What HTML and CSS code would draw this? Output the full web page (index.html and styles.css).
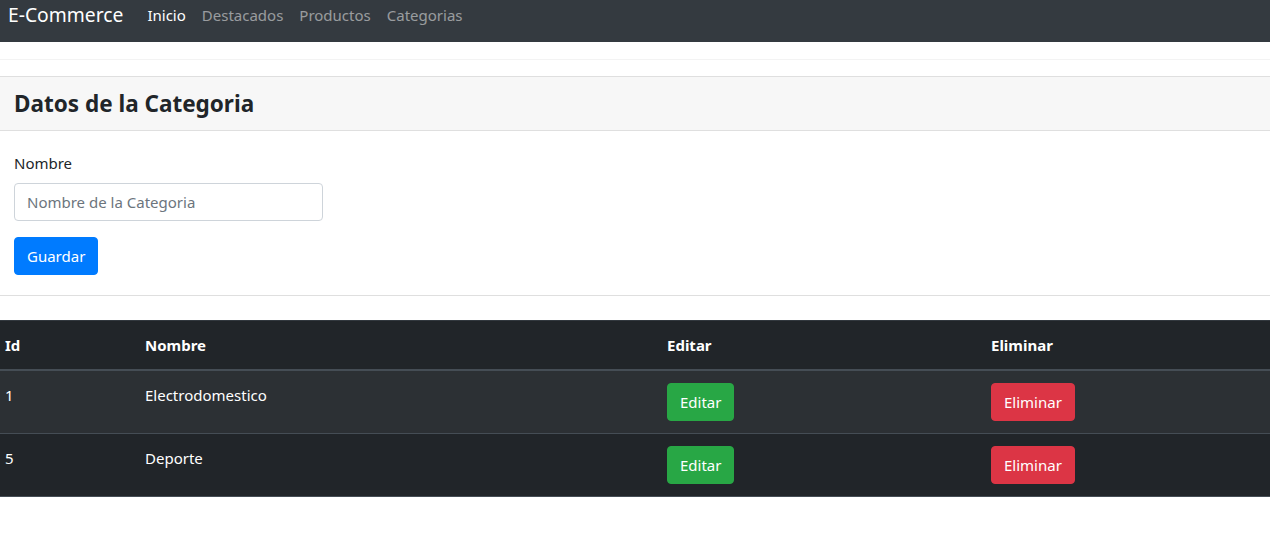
FILE: index.html
```html
<!DOCTYPE html>
<html lang="es">
<head>
<meta charset="utf-8">
<title>E-Commerce</title>
<link rel="stylesheet" href="styles.css">
</head>
<body>
<nav class="navbar">
  <a class="brand" href="#">E-Commerce</a>
  <ul class="nav-links">
    <li><a class="nav-link active" href="#">Inicio</a></li>
    <li><a class="nav-link" href="#">Destacados</a></li>
    <li><a class="nav-link" href="#">Productos</a></li>
    <li><a class="nav-link" href="#">Categorias</a></li>
  </ul>
</nav>
<div class="divider"></div>
<section class="card">
  <header class="card-header"><h3>Datos de la Categoria</h3></header>
  <div class="card-body">
    <div class="form-group">
      <label class="label" for="nombre">Nombre</label>
      <input class="input" id="nombre" type="text" placeholder="Nombre de la Categoria">
    </div>
    <button class="btn btn-primary" type="button">Guardar</button>
  </div>
</section>
<table class="table">
  <thead>
    <tr><th class="c1">Id</th><th class="c2">Nombre</th><th class="c3">Editar</th><th class="c4">Eliminar</th></tr>
  </thead>
  <tbody>
    <tr class="odd"><td>1</td><td>Electrodomestico</td><td><button class="btn btn-success" type="button">Editar</button></td><td><button class="btn btn-danger" type="button">Eliminar</button></td></tr>
    <tr><td>5</td><td>Deporte</td><td><button class="btn btn-success" type="button">Editar</button></td><td><button class="btn btn-danger" type="button">Eliminar</button></td></tr>
  </tbody>
</table>
</body>
</html>
```
FILE: styles.css
```css
* { box-sizing: border-box; }
html, body { margin: 0; padding: 0; }
body {
  font-family: "Segoe UI", "Noto Sans", "Open Sans", sans-serif;
  font-size: 15px;
  line-height: 24px;
  color: #212529;
  background: #fff;
}
.navbar {
  height: 42px;
  background: #343a40;
  display: flex;
  align-items: center;
  padding: 0 8px 12px 8px;
}
.brand {
  color: #fff;
  font-size: 19.3px;
  line-height: 30px;
  text-decoration: none;
  margin-right: 16px;
}
.nav-links {
  list-style: none;
  margin: 0;
  padding: 0;
  display: flex;
}
.nav-link {
  display: block;
  padding: 0 8px;
  color: rgba(255,255,255,.5);
  text-decoration: none;
}
.nav-link.active { color: #fff; }
.divider {
  height: 1px;
  background: #f3f3f3;
  margin: 17px 0 16px;
}
.card {
  border-top: 1px solid #dfdfdf;
  border-bottom: 1px solid #dfdfdf;
}
.card-header {
  background: #f7f7f7;
  border-bottom: 1px solid #dfdfdf;
  padding: 12px 14px;
}
.card-header h3 {
  margin: 0;
  font-size: 22.5px;
  line-height: 29px;
  font-weight: 700;
}
.card-body { padding: 20px 14px; }
.form-group { margin-bottom: 16px; }
.label { display: block; margin-bottom: 8px; }
.input {
  display: block;
  width: 309px;
  height: 38px;
  padding: 6px 12px;
  font: inherit;
  color: #495057;
  border: 1px solid #ced4da;
  border-radius: 4px;
  background: #fff;
}
.input::placeholder { color: #6c757d; opacity: 1; }
.btn {
  display: inline-block;
  height: 38px;
  padding: 6px 12px;
  font: inherit;
  line-height: 24px;
  color: #fff;
  border: 1px solid transparent;
  border-radius: 4px;
  cursor: pointer;
}
.btn-primary { background: #007bff; border-color: #007bff; }
.btn-success { background: #28a745; border-color: #28a745; }
.btn-danger { background: #dc3545; border-color: #dc3545; }
.table {
  width: 100%;
  margin-top: 24px;
  border-collapse: collapse;
  background: #212529;
  color: #fff;
  border-bottom: 1px solid #454d55;
  table-layout: fixed;
}
.table th, .table td {
  padding: 12px 12px 12px 5px;
  text-align: left;
  vertical-align: top;
  border-top: 1px solid #32383e;
}
.table th { font-weight: 700; }
.table thead th { border-bottom: 2px solid #454d55; }
.table tbody td { border-top: 1px solid #454d55; }
.table tr.odd { background: #2c3034; }
.c1 { width: 140px; }
.c2 { width: 522px; }
.c3 { width: 324px; }
```
